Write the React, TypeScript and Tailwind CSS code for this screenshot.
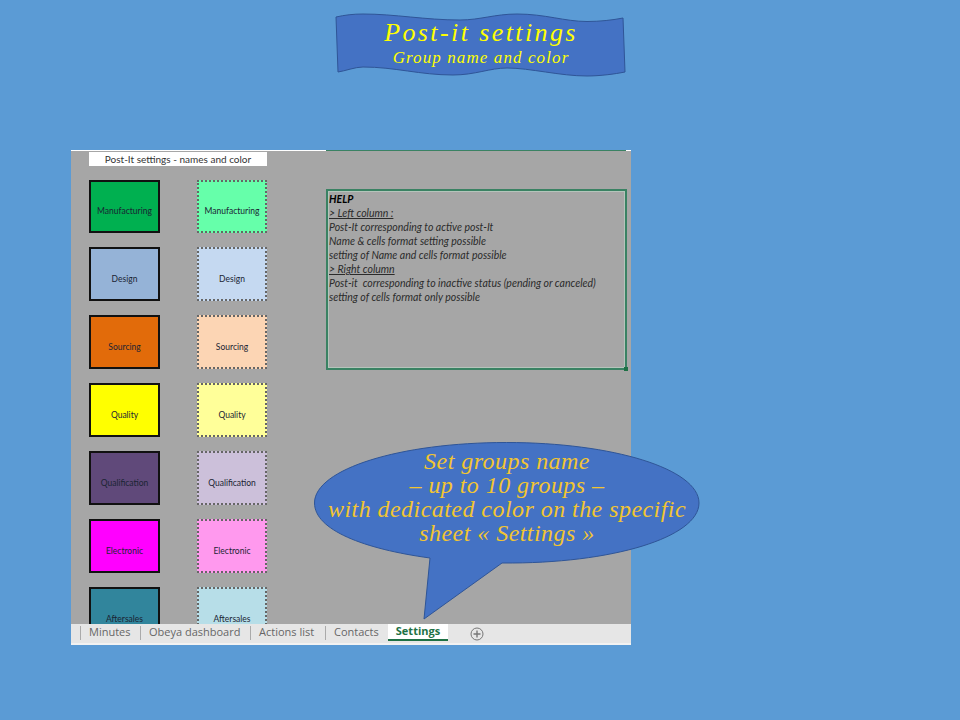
const groups = [
  { name: 'Manufacturing', active: 'bg-[#00b050]', inactive: 'bg-[#66ffaa]', height: 'h-[53px]' },
  { name: 'Design', active: 'bg-[#95b3d7]', inactive: 'bg-[#c5d9f1]', height: 'h-[54px]' },
  { name: 'Sourcing', active: 'bg-[#e26b0a]', inactive: 'bg-[#fcd5b4]', height: 'h-[54px]' },
  { name: 'Quality', active: 'bg-[#ffff00]', inactive: 'bg-[#ffff99]', height: 'h-[54px]' },
  { name: 'Qualification', active: 'bg-[#60497a]', inactive: 'bg-[#ccc0da]', height: 'h-[54px]' },
  { name: 'Electronic', active: 'bg-[#ff00ff]', inactive: 'bg-[#ff99ee]', height: 'h-[54px]' },
  { name: 'Aftersales', active: 'bg-[#31859c]', inactive: 'bg-[#b7dee8]', height: 'h-[54px]' },
]

const tabs = [
  { name: 'Minutes', width: 'w-[60px]' },
  { name: 'Obeya dashboard', width: 'w-[110px]' },
  { name: 'Actions list', width: 'w-[75px]' },
  { name: 'Contacts', width: 'w-[63px]' },
]

const script = "font-['Liberation_Serif',serif] italic"

function Banner() {
  return (
    <div className="relative ml-[335px] mt-[13px] flex h-[64px] w-[292px] flex-col items-center">
      <svg className="absolute inset-0" width="292" height="64" viewBox="0 0 292 64">
        <path
          d="M1 4 C10 2 18 1 28 1 C60 1 90 7 125 7 C145 7 160 1 182 1 C210 1 230 8.5 252 8.5 C265 8.5 278 7 288 5 L290 59 C280 61 265 63 252 63 C225 63 195 55 172 55 C155 55 140 62 118 62 C85 62 60 54 28 54 C20 54 10 58 3 59 Z"
          fill="#4472c4"
          stroke="#2f5597"
        />
      </svg>
      <div className={`relative mt-[7px] text-[26px] leading-[26px] tracking-[2.4px] text-[#ffff00] ${script}`}>Post-it settings</div>
      <div className={`relative mt-[2px] text-[17px] leading-[20px] tracking-[1.1px] text-[#ffff00] ${script}`}>Group name and color</div>
    </div>
  )
}

function Swatch({ name, color, height, inactive }: { name: string; color: string; height: string; inactive?: boolean }) {
  return (
    <div
      className={`flex items-center justify-center pt-[10px] font-['Lato',sans-serif] text-[8.5px] text-[#1a2433] ${height} ${color} ${
        inactive ? 'border-2 border-dotted border-[#666]' : 'border-2 border-[#111]'
      }`}
    >
      {name}
    </div>
  )
}

function Help() {
  return (
    <div className="relative ml-[59px] mt-[38px] h-[181px] w-[301px] border-2 border-[#3a8263] px-px pt-px font-['Lato',sans-serif] text-[10.5px] italic leading-[14px] text-[#2b2b2b] outline outline-1 -outline-offset-3 outline-[#b5c4bb]">
      <div className="font-bold text-black">HELP</div>
      <div className="underline">&gt; Left column :</div>
      <div>Post-It corresponding to active post-It</div>
      <div>Name &amp; cells format setting possible</div>
      <div>setting of Name and cells format possible</div>
      <div className="underline">&gt; Right column</div>
      <div>Post-it&nbsp; corresponding to inactive status (pending or canceled)</div>
      <div>setting of cells format only possible</div>
      <div className="absolute -bottom-[3px] -right-[3px] h-[4px] w-[4px] bg-[#1e7145]" />
    </div>
  )
}

function TabBar() {
  return (
    <div className="flex h-[21px] shrink-0 items-start border-b-2 border-[#f2f2f2] bg-[#e6e6e6] pl-[9px] font-['Open_Sans',sans-serif] text-[11px] leading-[15px] text-[#666]">
      {tabs.map((t) => (
        <div key={t.name} className={`mt-[2px] flex h-[14px] items-start border-l border-[#aaa] pl-[8px] ${t.width}`}>
          <span className="-mt-[2px]">{t.name}</span>
        </div>
      ))}
      <div className="flex h-[17px] w-[60px] items-center justify-center border-b-2 border-[#1e7145] bg-white font-bold text-[#1e7145]">
        <span className="-mt-[2px]">Settings</span>
      </div>
      <svg className="ml-[22px] mt-[3px]" width="14" height="14" viewBox="0 0 14 14" fill="none" stroke="#777">
        <circle cx="7" cy="7" r="6" />
        <path d="M7 3.5v7M3.5 7h7" strokeWidth="1.4" />
      </svg>
    </div>
  )
}

function Balloon() {
  return (
    <div className="absolute left-[314px] top-[442px] h-[180px] w-[386px]">
      <svg className="absolute inset-0" width="386" height="180" viewBox="0 0 386 180">
        <path
          d="M116 116 C50 107 0.5 88 0.5 61 C0.5 27 86 0.5 192.5 0.5 C299 0.5 385 27 385 61 C385 95 299 122 188 121 L110 177 Z"
          fill="#4472c4"
          stroke="#2f5597"
        />
      </svg>
      <div className={`relative flex flex-col items-center pt-[7px] text-[24px] leading-[24px] tracking-[0.45px] text-[#f2c531] ${script}`}>
        <div>Set groups name</div>
        <div>– up to 10 groups –</div>
        <div>with dedicated color on the specific</div>
        <div>sheet « Settings »</div>
      </div>
    </div>
  )
}

export default function App() {
  return (
    <div className="relative flex h-[720px] w-[960px] flex-col overflow-hidden bg-[#5b9bd5]">
      <Banner />
      <div className="ml-[71px] mt-[73px] flex h-[495px] w-[560px] flex-col bg-[#a6a6a6]">
        <div className="flex h-px shrink-0 bg-white">
          <div className="ml-[255px] w-[300px] bg-[#3a8263]" />
        </div>
        <div className="flex min-h-0 flex-1 overflow-hidden">
          <div className="ml-[18px] w-[178px] shrink-0">
            <div className="mt-px flex h-[14px] items-center justify-center bg-white font-['Lato',sans-serif] text-[10px] text-[#333]">
              Post-It settings - names and color
            </div>
            <div className="mt-[14px] grid grid-cols-[71px_70px] gap-x-[37px] gap-y-[14px]">
              {groups.map((g) => (
                <div key={g.name} className="contents">
                  <Swatch name={g.name} color={g.active} height={g.height} />
                  <Swatch name={g.name} color={g.inactive} height={g.height} inactive />
                </div>
              ))}
            </div>
          </div>
          <Help />
        </div>
        <TabBar />
      </div>
      <Balloon />
    </div>
  )
}
